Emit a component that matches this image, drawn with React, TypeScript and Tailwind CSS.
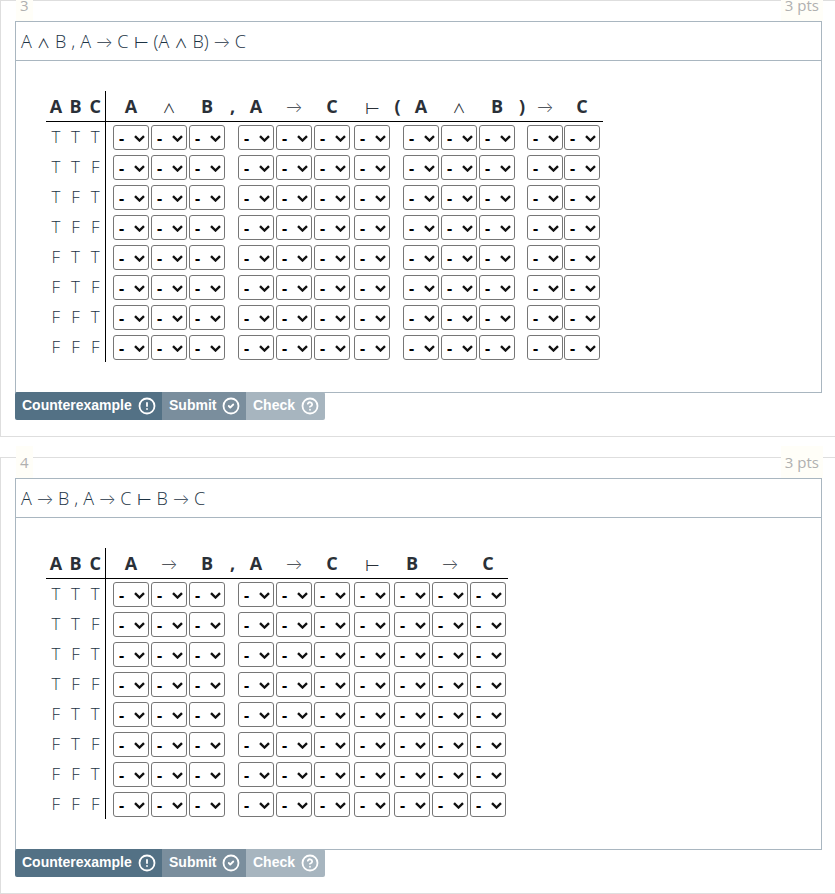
import React from 'react'
import { CircleAlert, CircleCheck, CircleHelp } from 'lucide-react'

type Col = { label: string; width: string; select: boolean }

const col = (label: string, width = 'w-[38px]', select = true): Col => ({ label, width, select })

const firstColumns: Col[] = [
  col('A'), col('∧'), col('B'), col(',', 'w-[11px]', false),
  col('A'), col('→'), col('C', 'w-[40px]'), col('⊢'),
  col('(', 'w-[11px]', false), col('A'), col('∧'), col('B'),
  col(')', 'w-[10px]', false), col('→', 'w-[37px]'), col('C', 'w-[39px]'),
]

const secondColumns: Col[] = [
  col('A'), col('→'), col('B'), col(',', 'w-[11px]', false),
  col('A'), col('→'), col('C', 'w-[40px]'), col('⊢', 'w-[40px]'),
  col('B'), col('→'), col('C'),
]

const rows = ['TTT', 'TTF', 'TFT', 'TFF', 'FTT', 'FTF', 'FFT', 'FFF']

// the logic signs need other fonts than the letters around them
const symbolClass: Record<string, string> = {
  '→': "font-['Lato'] text-[16px] font-light",
  '∧': "font-['Noto_Sans_CJK_SC'] text-[13px] font-normal",
  '⊢': "font-['Noto_Sans_CJK_SC'] text-[17px] font-normal",
}

function Formula({ text }: { text: string }) {
  return (
    <>
      {text.split('').map((ch, i) =>
        symbolClass[ch] ? <span key={i} className={symbolClass[ch]}>{ch}</span> : ch,
      )}
    </>
  )
}

function TruthSelect() {
  return (
    <div className="relative w-[36px] h-[25px]">
      <select
        defaultValue="-"
        className="block w-full h-full appearance-none border border-[#767676] rounded-[3px] bg-white pl-[5px] text-black text-[16px] font-bold"
      >
        <option>-</option>
        <option>T</option>
        <option>F</option>
      </select>
      <svg className="absolute left-[21px] top-[10px] pointer-events-none" width="11" height="7" viewBox="0 0 11 7" fill="none">
        <path d="M1 1.2 L5.5 5.5 L10 1.2" stroke="#111" strokeWidth="2.4" />
      </svg>
    </div>
  )
}

function TruthTable({ columns }: { columns: Col[] }) {
  return (
    <div className="w-fit">
      <div className="flex h-[31px] border-b border-black text-[#2a3038]">
        <div className="flex w-[60px] border-r border-black">
          {['A', 'B', 'C'].map((v) => (
            <div key={v} className="w-[20px] text-center text-[18px] font-bold leading-[31px]">{v}</div>
          ))}
        </div>
        <div className="flex pl-[7px]">
          {columns.map((c, i) => (
            <div key={i} className={c.width}>
              <div className={`${c.select ? 'w-[36px]' : 'w-full'} text-center text-[18px] font-bold leading-[31px]`}>
                <Formula text={c.label} />
              </div>
            </div>
          ))}
        </div>
      </div>
      {rows.map((r) => (
        <div key={r} className="flex h-[30px]">
          <div className="flex w-[60px] border-r border-black">
            {r.split('').map((v, i) => (
              <div key={i} className="w-[20px] text-center text-[17px] font-light text-[#1c3344] leading-[30px]">{v}</div>
            ))}
          </div>
          <div className="flex pl-[7px] pt-[3px]">
            {columns.map((c, i) => (
              <div key={i} className={c.width}>
                {c.select && <TruthSelect />}
              </div>
            ))}
          </div>
        </div>
      ))}
    </div>
  )
}

function Legend({ side, children }: { side: string; children: React.ReactNode }) {
  return (
    <div className={`absolute top-[-12px] ${side} h-[32px] px-[4px] bg-[#fffef8] text-[#b0b0b0] text-[15px] leading-[32px]`}>
      {children}
    </div>
  )
}

function Question({ number, formula, columns }: { number: string; formula: string; columns: Col[] }) {
  return (
    <section className="relative border border-[#dedede] border-r-0 pt-[20px] pl-[14px] pr-[13px] pb-[16px]">
      <Legend side="left-[15px]">{number}</Legend>
      <Legend side="right-[12px]">3 pts</Legend>
      <div className="border border-[#a9b6c0]">
        <div className="h-[39px] border-b border-[#a9b6c0] px-[5px] text-[18px] font-light text-[#1c3344] leading-[38px] [word-spacing:0.4px]">
          <Formula text={formula} />
        </div>
        <div className="pt-[30px] pb-[30px] pl-[30px]">
          <TruthTable columns={columns} />
        </div>
      </div>
      <div className="flex -mt-px font-['Liberation_Sans',sans-serif] text-[14px] font-bold text-white">
        <button className="flex items-center gap-[6px] h-[28px] pb-px pl-[7px] w-[147px] bg-[#537185] rounded-l-[2px]">
          Counterexample <CircleAlert size={18} strokeWidth={2.4} />
        </button>
        <button className="flex items-center gap-[6px] h-[28px] pb-px pl-[7px] w-[84px] bg-[#7a8e9d]">
          Submit <CircleCheck size={18} strokeWidth={2.4} />
        </button>
        <button className="flex items-center gap-[6px] h-[28px] pb-px pl-[7px] w-[79px] bg-[#a7b5bf] rounded-r-[2px]">
          Check <CircleHelp size={18} strokeWidth={2.4} />
        </button>
      </div>
    </section>
  )
}

export default function App() {
  return (
    <div className="flex flex-col gap-[20px] bg-white text-[#2a3a48] font-['Open_Sans',sans-serif]">
      <Question number="3" formula="A ∧ B , A → C ⊢ (A ∧ B) → C" columns={firstColumns} />
      <Question number="4" formula="A → B , A → C ⊢ B → C" columns={secondColumns} />
    </div>
  )
}
